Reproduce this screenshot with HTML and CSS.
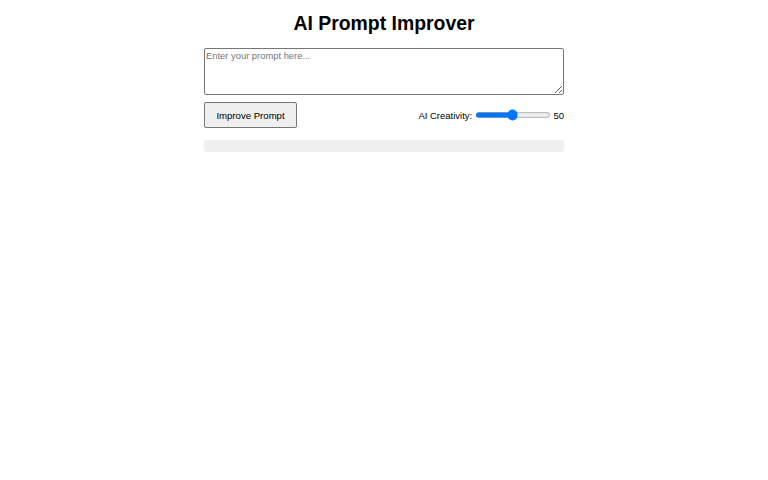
FILE: index.html
```html
<!DOCTYPE html>
<html>
<head>
<title>AI Prompt Improver</title>
<link rel="stylesheet" href="styles.css">
</head>
<body>
	<div class="container">
		<h1 class="title">AI Prompt Improver</h1>
		<textarea class="prompt-input" id="prompt" placeholder="Enter your prompt here..."></textarea>
		<div class="controls">
			<button class="improve-btn" id="improve">Improve Prompt</button>
			<div class="creativity">
				<label for="creativity">AI Creativity:</label>
				<input type="range" id="creativity" min="0" max="100" value="50">
				<span id="creativityValue">50</span>
			</div>
		</div>
		<div class="result" id="result"></div>
	</div>
</body>
</html>
```
FILE: styles.css
```css
body{
	margin:0;
	font-family:"Liberation Sans", Arial, sans-serif;
	background:#ffffff;
	color:#000000;
}
.container{
	width:360px;
	margin:0 auto;
	padding-top:12px;
}
.title{
	font-size:19.4px;
	line-height:23px;
	text-align:center;
	margin:0 0 13px 0;
}
.prompt-input{
	display:block;
	width:360px;
	height:47px;
	box-sizing:border-box;
	padding:1px;
	font-family:"Liberation Sans", Arial, sans-serif;
	font-size:9.4px;
	border:1px solid #767676;
	border-radius:2px;
	resize:vertical;
}
.prompt-input::placeholder{
	color:#757575;
}
.controls{
	display:flex;
	justify-content:space-between;
	align-items:center;
	margin-top:7px;
}
.improve-btn{
	width:93px;
	height:26px;
	font-family:"Liberation Sans", Arial, sans-serif;
	font-size:9.6px;
	background:#efefef;
	border:1px solid #767676;
	border-radius:2px;
	padding:0;
}
.creativity{
	display:flex;
	align-items:center;
	font-size:9.5px;
}
/* the slider is drawn at a smaller scale than the default control */
.creativity input{
	zoom:0.7;
	width:108px;
	margin:0 4px;
}
.result{
	margin-top:12px;
	height:12px;
	background:#f0f0f0;
	border-radius:3px;
}
```
